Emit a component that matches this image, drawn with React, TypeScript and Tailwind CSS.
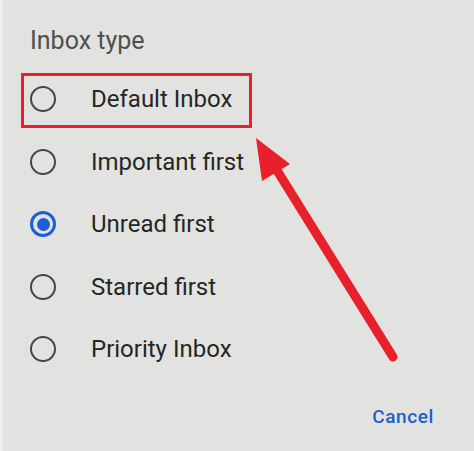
import React from 'react';

const options = ['Default Inbox', 'Important first', 'Unread first', 'Starred first', 'Priority Inbox'];

const Radio: React.FC<{ checked?: boolean }> = ({ checked }) => (
  <span
    className={`flex h-[26px] w-[26px] shrink-0 items-center justify-center rounded-full ${
      checked ? 'border-[3px] border-[#1d5fd8]' : 'border-[2.5px] border-[#464646]'
    }`}
  >
    {checked && <span className="h-[13px] w-[13px] rounded-full bg-[#1d5fd8]" />}
  </span>
);

const App: React.FC = () => {
  return (
    <div
      className="relative h-[451px] w-[474px] overflow-hidden border-l-[3px] border-[#eceeec] bg-[#e2e3e1]"
      style={{ fontFamily: 'Roboto, "Noto Sans", sans-serif' }}
    >
      <div className="flex h-full flex-col">
        <h2 className="pl-[27px] pt-[24px] text-[25px] leading-[34px] text-[#4e504e]">Inbox type</h2>

        <div className="mt-[10px] flex flex-col">
          {options.map((label, i) => (
            <div key={label} className="flex h-[62.5px] items-center pl-[27px]">
              <Radio checked={i === 2} />
              <span className="ml-[35px] text-[24px] text-[#252625]">{label}</span>
            </div>
          ))}
        </div>

        <div className="mt-[22px] flex justify-end pr-[40px]">
          <button className="text-[19px] font-medium tracking-[0.6px] text-[#1c5fcb]">Cancel</button>
        </div>
      </div>

      {/* highlight around the first option */}
      <div className="pointer-events-none absolute left-[18px] top-[73px] h-[55px] w-[231px] border-[3px] border-[#e8202b]" />

      {/* pointer arrow, drawn in page coordinates */}
      <svg className="pointer-events-none absolute left-0 top-0" width="471" height="451" viewBox="3 0 471 451">
        <line x1="393" y1="357" x2="278" y2="172" stroke="#e8202b" strokeWidth="9" strokeLinecap="round" />
        <polygon points="256,138 290,164 262,181" fill="#e8202b" />
      </svg>
    </div>
  );
};

export default App;
